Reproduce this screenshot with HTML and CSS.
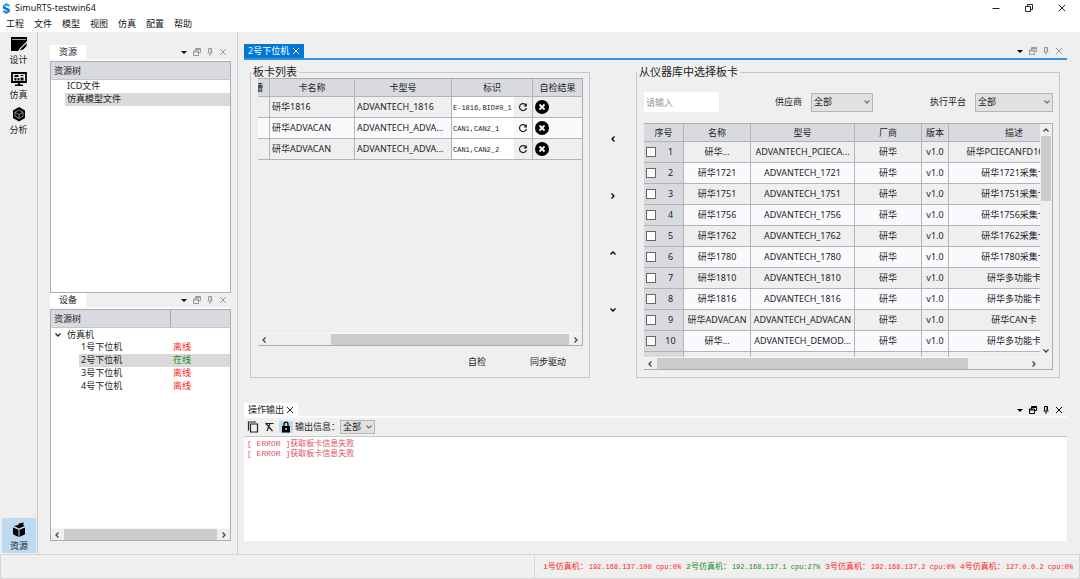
FILE: index.html
```html
<!DOCTYPE html>
<html lang="zh-CN">

<head>
    <meta charset="UTF-8">
    <meta name="viewport" content="width=device-width, initial-scale=1.0">
    <title>SimuRTS-testwin64</title>
    <link rel="stylesheet" href="styles.css">
</head>

<body>
    <!-- shared icons -->
    <svg class="sprite" aria-hidden="true">
        <symbol id="i-drop" viewBox="0 0 8 8"><path d="M1 3h6L4 6z" fill="currentColor"/></symbol>
        <symbol id="i-float" viewBox="0 0 8 8"><path d="M2.500 3V.5h5v4H5.500M.5 3h5v4.500h-5zM.5 4h5M2.500 1.500h5" fill="none" stroke="currentColor"/></symbol>
        <symbol id="i-pin" viewBox="0 0 8 8"><path d="M2.500 4.500v-4h3v4M1.500 5h5M4 5v3M5 .5v4" fill="none" stroke="currentColor"/></symbol>
        <symbol id="i-close" viewBox="0 0 8 8"><path d="M1 1l6 6M7 1L1 7" fill="none" stroke="currentColor"/></symbol>
        <symbol id="i-left" viewBox="0 0 8 8"><path d="M5.500 1.500L3 4l2.500 2.500" fill="none" stroke="currentColor" stroke-width="1.300"/></symbol>
        <symbol id="i-right" viewBox="0 0 8 8"><path d="M2.500 1.500L5 4 2.500 6.500" fill="none" stroke="currentColor" stroke-width="1.300"/></symbol>
        <symbol id="i-up" viewBox="0 0 8 8"><path d="M1.500 5.500L4 3l2.500 2.500" fill="none" stroke="currentColor" stroke-width="1.300"/></symbol>
        <symbol id="i-down" viewBox="0 0 8 8"><path d="M1.500 2.500L4 5l2.500-2.500" fill="none" stroke="currentColor" stroke-width="1.300"/></symbol>
        <symbol id="i-refresh" viewBox="0 0 10 10"><path d="M8 3.200A3.500 3.500 0 1 0 8.400 6" fill="none" stroke="#222" stroke-width="1.200"/><path d="M8.900 1v3.400H5.500z" fill="#222"/></symbol>
        <symbol id="i-fail" viewBox="0 0 14 14"><circle cx="7" cy="7" r="7" fill="#000"/><path d="M4.500 4.500l5 5M9.500 4.500l-5 5" stroke="#fff" stroke-width="1.800"/></symbol>
    </svg>

    <header class="titlebar">
        <svg class="logo" viewBox="0 0 10 12"><path d="M5 0l4 2-1 2-3-1-2 1-2-1.500z" fill="#2ba4e0"/><path d="M1 2.500l2 1.500 5.500 2.500v3L5 8 1 6z" fill="#1673be"/><path d="M8 6.500l1 .5v2.500L5 12 1 9.800l1-2L5 9z" fill="#2388d0"/></svg>
        <span class="app-name">SimuRTS-testwin64</span>
        <div class="window-buttons">
            <button aria-label="最小化"><svg viewBox="0 0 8 8"><path d="M.5 4.500h7" stroke="#222"/></svg></button>
            <button aria-label="还原"><svg viewBox="0 0 8 8"><path d="M.5 2.500h5v5h-5zM2.500 2.500v-2h5v5h-2" fill="none" stroke="#222"/></svg></button>
            <button aria-label="关闭"><svg viewBox="0 0 8 8"><path d="M.8.8l6.400 6.400M7.200.8L.8 7.200" stroke="#222"/></svg></button>
        </div>
    </header>
    <nav class="menubar">
        <a href="#">工程</a>
        <a href="#">文件</a>
        <a href="#">模型</a>
        <a href="#">视图</a>
        <a href="#">仿真</a>
        <a href="#">配置</a>
        <a href="#">帮助</a>
    </nav>

    <main class="workspace">
        <aside class="rail">
            <button>
                <svg viewBox="0 0 16 16"><path d="M0 1h16v4L9 12l-2 3H0z" fill="#000"/><path d="M1 3.500h14" stroke="#ccc" stroke-width=".8"/><path d="M16 6.500l-6 5.500-2 3 4-1 4-4z" fill="#000" stroke="#efefef" stroke-width=".8"/></svg>
                设计
            </button>
            <button>
                <svg viewBox="0 0 16 16"><path d="M1 2h14v9H1z" fill="none" stroke="#000" stroke-width="1.800"/><path d="M3.500 4h4v2h-4zM3.500 7h2v2.500h-2zM6.500 7h2v2.500h-2zM9.500 4h3v1h-3zM9.500 6.500h3v3h-3zM7 11h2v3H7zM4 13.500h8v1.500H4z" fill="#000"/></svg>
                仿真
            </button>
            <button>
                <svg viewBox="0 0 16 16"><path d="M8 1l6 3.500v7.500L8 15.500 2 12V4.500z" fill="#000"/><path d="M8 4l4 2.200v4.100l-4 2.200-4-2.200V6.200zM4 6.200L8 8.500l4-2.300M8 8.500v4" fill="none" stroke="#bbb" stroke-width=".7"/></svg>
                分析
            </button>
            <button class="active">
                <svg viewBox="0 0 16 16"><path d="M2 5.500l5.500 2.300V15L2 12.200zM14 5.500L8.500 7.800V15l5.500-2.800z" fill="#000"/><path d="M3 4l4-1 1-1.500 5-1-1 2 1.500 1.500L8 6.500z" fill="#000"/></svg>
                资源
            </button>
        </aside>

        <section class="side">
            <div class="dock">
                <div class="dock-head">
                    <span class="dock-tab">资源</span>
                    <div class="dock-tools">
                        <button class="dark" aria-label="菜单"><svg><use href="#i-drop"/></svg></button>
                        <button aria-label="浮动"><svg><use href="#i-float"/></svg></button>
                        <button aria-label="固定"><svg><use href="#i-pin"/></svg></button>
                        <button aria-label="关闭"><svg><use href="#i-close"/></svg></button>
                    </div>
                </div>
                <div class="tree">
                    <div class="tree-head"><span>资源树</span></div>
                    <ul class="tree-list">
                        <li>ICD文件</li>
                        <li class="selected">仿真模型文件</li>
                    </ul>
                </div>
            </div>
            <div class="dock">
                <div class="dock-head">
                    <span class="dock-tab">设备</span>
                    <div class="dock-tools">
                        <button class="dark" aria-label="菜单"><svg><use href="#i-drop"/></svg></button>
                        <button aria-label="浮动"><svg><use href="#i-float"/></svg></button>
                        <button aria-label="固定"><svg><use href="#i-pin"/></svg></button>
                        <button aria-label="关闭"><svg><use href="#i-close"/></svg></button>
                    </div>
                </div>
                <div class="tree">
                    <div class="tree-head split"><span>资源树</span></div>
                    <div class="tree-root"><svg><use href="#i-down"/></svg>仿真机</div>
                    <ul class="tree-list devices">
                        <li><span>1号下位机</span><span class="offline">离线</span></li>
                        <li class="selected"><span>2号下位机</span><span class="online">在线</span></li>
                        <li><span>3号下位机</span><span class="offline">离线</span></li>
                        <li><span>4号下位机</span><span class="offline">离线</span></li>
                    </ul>
                    <div class="hscroll">
                        <svg><use href="#i-left"/></svg>
                        <div class="track"><div class="thumb full"></div></div>
                        <svg><use href="#i-right"/></svg>
                    </div>
                </div>
            </div>
        </section>

        <section class="content">
            <div class="editor-head">
                <span class="editor-tab">2号下位机 <svg><use href="#i-close"/></svg></span>
                <div class="dock-tools">
                    <button class="dark" aria-label="菜单"><svg><use href="#i-drop"/></svg></button>
                    <button aria-label="浮动"><svg><use href="#i-float"/></svg></button>
                    <button aria-label="固定"><svg><use href="#i-pin"/></svg></button>
                    <button aria-label="关闭"><svg><use href="#i-close"/></svg></button>
                </div>
            </div>

            <div class="editor">
                <fieldset class="cards">
                    <legend>板卡列表</legend>
                    <div class="table-frame">
                        <div class="table-view">
                            <table class="card-table">
                                <thead>
                                    <tr><th class="c-cut"><span>槽</span></th><th class="c-name">卡名称</th><th class="c-model">卡型号</th><th class="c-id">标识</th><th>自检结果</th></tr>
                                </thead>
                                <tbody>
                                    <tr>
                                        <td></td><td>研华1816</td><td>ADVANTECH_1816</td>
                                        <td class="id-cell"><div><input type="text" aria-label="标识" value="E-1816,BID#0_1"><button aria-label="刷新"><svg><use href="#i-refresh"/></svg></button></div></td>
                                        <td><svg class="fail"><use href="#i-fail"/></svg></td>
                                    </tr>
                                    <tr>
                                        <td></td><td>研华ADVACAN</td><td>ADVANTECH_ADVA...</td>
                                        <td class="id-cell"><div><input type="text" aria-label="标识" value="CAN1,CAN2_1"><button aria-label="刷新"><svg><use href="#i-refresh"/></svg></button></div></td>
                                        <td><svg class="fail"><use href="#i-fail"/></svg></td>
                                    </tr>
                                    <tr>
                                        <td></td><td>研华ADVACAN</td><td>ADVANTECH_ADVA...</td>
                                        <td class="id-cell"><div><input type="text" aria-label="标识" value="CAN1,CAN2_2"><button aria-label="刷新"><svg><use href="#i-refresh"/></svg></button></div></td>
                                        <td><svg class="fail"><use href="#i-fail"/></svg></td>
                                    </tr>
                                </tbody>
                            </table>
                        </div>
                        <div class="hscroll">
                            <svg><use href="#i-left"/></svg>
                            <div class="track"><div class="thumb right"></div></div>
                            <svg><use href="#i-right"/></svg>
                        </div>
                    </div>
                    <div class="card-actions">
                        <button>自检</button>
                        <button>同步驱动</button>
                    </div>
                </fieldset>

                <div class="movers">
                    <button aria-label="添加"><svg><use href="#i-left"/></svg></button>
                    <button aria-label="移除"><svg><use href="#i-right"/></svg></button>
                    <button aria-label="上移"><svg><use href="#i-up"/></svg></button>
                    <button aria-label="下移"><svg><use href="#i-down"/></svg></button>
                </div>

                <fieldset class="library">
                    <legend>从仪器库中选择板卡</legend>
                    <div class="filters">
                        <input type="text" placeholder="请输入" aria-label="搜索">
                        <label for="vendor">供应商</label>
                        <span class="select vendor"><select id="vendor"><option>全部</option></select><svg><use href="#i-down"/></svg></span>
                        <label for="platform">执行平台</label>
                        <span class="select platform"><select id="platform"><option>全部</option></select><svg><use href="#i-down"/></svg></span>
                    </div>
                    <div class="table-frame">
                        <div class="table-row">
                            <div class="table-view">
                                <table class="lib-table">
                                    <thead>
                                        <tr><th class="l-no">序号</th><th class="l-name">名称</th><th class="l-model">型号</th><th class="l-vendor">厂商</th><th class="l-ver">版本</th><th class="l-desc">描述</th></tr>
                                    </thead>
                                    <tbody>
                                        <tr><th><label><input type="checkbox"><span>1</span></label></th><td>研华...</td><td>ADVANTECH_PCIECA...</td><td>研华</td><td>v1.0</td><td>研华PCIECANFD16板卡</td></tr>
                                        <tr><th><label><input type="checkbox"><span>2</span></label></th><td>研华1721</td><td>ADVANTECH_1721</td><td>研华</td><td>v1.0</td><td>研华1721采集卡</td></tr>
                                        <tr><th><label><input type="checkbox"><span>3</span></label></th><td>研华1751</td><td>ADVANTECH_1751</td><td>研华</td><td>v1.0</td><td>研华1751采集卡</td></tr>
                                        <tr><th><label><input type="checkbox"><span>4</span></label></th><td>研华1756</td><td>ADVANTECH_1756</td><td>研华</td><td>v1.0</td><td>研华1756采集卡</td></tr>
                                        <tr><th><label><input type="checkbox"><span>5</span></label></th><td>研华1762</td><td>ADVANTECH_1762</td><td>研华</td><td>v1.0</td><td>研华1762采集卡</td></tr>
                                        <tr><th><label><input type="checkbox"><span>6</span></label></th><td>研华1780</td><td>ADVANTECH_1780</td><td>研华</td><td>v1.0</td><td>研华1780采集卡</td></tr>
                                        <tr><th><label><input type="checkbox"><span>7</span></label></th><td>研华1810</td><td>ADVANTECH_1810</td><td>研华</td><td>v1.0</td><td>研华多功能卡</td></tr>
                                        <tr><th><label><input type="checkbox"><span>8</span></label></th><td>研华1816</td><td>ADVANTECH_1816</td><td>研华</td><td>v1.0</td><td>研华多功能卡</td></tr>
                                        <tr><th><label><input type="checkbox"><span>9</span></label></th><td>研华ADVACAN</td><td>ADVANTECH_ADVACAN</td><td>研华</td><td>v1.0</td><td>研华CAN卡</td></tr>
                                        <tr><th><label><input type="checkbox"><span>10</span></label></th><td>研华...</td><td>ADVANTECH_DEMOD...</td><td>研华</td><td>v1.0</td><td>研华多功能卡</td></tr>
                                        <tr><th></th><td></td><td></td><td></td><td></td><td></td></tr>
                                    </tbody>
                                </table>
                            </div>
                            <div class="vscroll">
                                <svg><use href="#i-up"/></svg>
                                <div class="track"><div class="thumb"></div></div>
                                <svg><use href="#i-down"/></svg>
                            </div>
                        </div>
                        <div class="hscroll corner">
                            <svg><use href="#i-left"/></svg>
                            <div class="track"><div class="thumb left"></div></div>
                            <svg><use href="#i-right"/></svg>
                        </div>
                    </div>
                </fieldset>
            </div>

            <div class="output">
                <div class="output-head">
                    <span class="output-tab">操作输出 <svg><use href="#i-close"/></svg></span>
                    <div class="dock-tools">
                        <button class="dark" aria-label="菜单"><svg><use href="#i-drop"/></svg></button>
                        <button class="dark" aria-label="浮动"><svg><use href="#i-float"/></svg></button>
                        <button class="dark" aria-label="固定"><svg><use href="#i-pin"/></svg></button>
                        <button class="dark" aria-label="关闭"><svg><use href="#i-close"/></svg></button>
                    </div>
                </div>
                <div class="output-tools">
                    <button aria-label="复制"><svg viewBox="0 0 12 12"><path d="M3.500 3h7v8h-7z" fill="none" stroke="#222" stroke-width="1.200"/><path d="M1.500 9.500V1H9" fill="none" stroke="#222" stroke-width="1.200"/></svg></button>
                    <button aria-label="清除格式"><svg viewBox="0 0 12 12"><path d="M3 2.500h7.500M2.500 2l7 8M6.800 3L4 10" fill="none" stroke="#222" stroke-width="1.200"/></svg></button>
                    <button class="locked" aria-label="锁定"><svg viewBox="0 0 12 12"><path d="M2 5h8v6.500H2z" fill="#000"/><path d="M4 5V3.200a2 2 0 0 1 4 0V5" fill="none" stroke="#000" stroke-width="1.300"/><circle cx="6" cy="8" r="1" fill="#bcd9ee"/></svg></button>
                    <label for="level">输出信息：</label>
                    <span class="select level"><select id="level"><option>全部</option></select><svg><use href="#i-down"/></svg></span>
                </div>
                <div class="log">
                    <p>[ ERROR ]获取板卡信息失败</p>
                    <p>[ ERROR ]获取板卡信息失败</p>
                </div>
            </div>
        </section>
    </main>

    <footer class="statusbar">
        <div class="hosts">
            <span class="offline"><b>1号仿真机：</b>192.168.137.100 cpu:0%</span>
            <span class="online"><b>2号仿真机：</b>192.168.137.1 cpu:27%</span>
            <span class="offline"><b>3号仿真机：</b>192.168.137.2 cpu:0%</span>
            <span class="offline"><b>4号仿真机：</b>127.0.0.2 cpu:0%</span>
        </div>
    </footer>
</body>

</html>
```
FILE: styles.css
```css
* {
    box-sizing: border-box;
}

body {
    margin: 0;
    height: 100vh;
    display: flex;
    flex-direction: column;
    background: #efefef;
    color: #222;
    font-family: "Noto Sans", "Noto Sans CJK SC", sans-serif;
    font-size: 9px;
    line-height: 12px;
    overflow: hidden;
}

button, input, select {
    font: inherit;
    color: inherit;
}

button {
    border: none;
    background: none;
    padding: 0;
}

svg {
    display: block;
    width: 8px;
    height: 8px;
    flex: none;
}

.sprite {
    position: absolute;
    width: 0;
    height: 0;
}

.offline {
    color: #ff2020;
}

.online {
    color: #109010;
}

/* title and menu */
.titlebar {
    display: flex;
    align-items: center;
    height: 16px;
    padding: 0 14px 0 2px;
    background: #fff;
}

.logo {
    width: 9px;
    height: 11px;
    margin-right: 4px;
}

.window-buttons {
    display: flex;
    gap: 25px;
    margin-left: auto;
}

.menubar {
    display: flex;
    gap: 10px;
    height: 16px;
    padding: 2px 6px;
    background: #fff;
}

.menubar a {
    color: #111;
    text-decoration: none;
}

.workspace {
    flex: 1;
    display: flex;
    min-height: 0;
}

.rail {
    display: flex;
    flex-direction: column;
    width: 38px;
    border-right: 1px solid #c8c8c8;
}

.rail button {
    display: flex;
    flex-direction: column;
    align-items: center;
    gap: 2px;
    height: 35px;
    padding-top: 4px;
}

.rail svg {
    width: 16px;
    height: 16px;
}

.rail .active {
    margin: auto 1px 1px 2px;
    background: #bedaf0;
}

/* left docks */
.side {
    display: flex;
    flex-direction: column;
    width: 200px;
    padding: 13px 6px 13px 12px;
    border-right: 1px solid #cfcfcf;
}

.dock {
    flex: 1;
    display: flex;
    flex-direction: column;
}

.dock-head {
    display: flex;
    align-items: center;
    justify-content: space-between;
    height: 16px;
    border-bottom: 2px solid #fafafa;
}

.dock-tab {
    padding: 0 9px;
    line-height: 14px;
    background: #fff;
}

.dock-tools {
    display: flex;
    gap: 5px;
    padding-right: 4px;
    color: #999;
}

.dock-tools .dark {
    color: #000;
}

.tree {
    flex: 1;
    display: flex;
    flex-direction: column;
    border: 1px solid #abadb5;
    background: #fff;
}

.tree-head {
    display: flex;
    height: 18px;
    padding-left: 3px;
    line-height: 17px;
    background: #d8dae0;
    border-bottom: 1px solid #c5c7cc;
}

.tree-head.split span {
    width: 117px;
    border-right: 1px solid #aaa;
}

.tree-root {
    display: flex;
    align-items: center;
    gap: 5px;
    height: 13px;
    padding-left: 3px;
}

.tree-list {
    margin: 0;
    padding: 0 0 0 14px;
    list-style: none;
}

.tree-list li {
    display: flex;
    height: 13px;
    padding-left: 2px;
}

.tree-list .selected {
    background: #d9d9d9;
}

.tree-list.devices {
    padding-left: 28px;
}

.devices span:first-child {
    width: 92px;
}

/* scroll bars */
.hscroll {
    display: flex;
    align-items: center;
    gap: 3px;
    height: 12px;
    margin-top: auto;
    padding: 0 2px;
    border-top: 1px solid #f8f8f8;
    background: #efefef;
    color: #444;
}

.hscroll.corner {
    padding-right: 14px;
}

.vscroll {
    display: flex;
    flex-direction: column;
    align-items: center;
    gap: 2px;
    width: 12px;
    padding: 2px 0;
    color: #444;
}

.track {
    flex: 1;
    align-self: stretch;
}

.thumb {
    height: 100%;
    background: #cbcbcb;
}

.thumb.right {
    width: 80%;
    margin-left: auto;
}

.thumb.left {
    width: 84%;
}

.vscroll .thumb {
    height: 31%;
    margin: 0 1px;
}

/* main area */
.content {
    flex: 1;
    display: flex;
    flex-direction: column;
    min-width: 0;
    padding: 12px 13px 13px 6px;
}

.editor-head {
    display: flex;
    align-items: center;
    justify-content: space-between;
    height: 16px;
    border-bottom: 2px solid #3292dc;
}

.editor-tab {
    display: flex;
    align-items: center;
    gap: 3px;
    height: 14px;
    padding: 0 4px;
    background: #0078d7;
    color: #fff;
}

.editor {
    flex: 1;
    display: flex;
    padding: 6px 7px 25px 6px;
    min-height: 0;
}

fieldset {
    display: flex;
    flex-direction: column;
    min-width: 0;
    margin: 0;
    border: 1px solid #c8c8c8;
}

legend {
    margin-left: -7px;
    padding: 0 2px;
    font-size: 11px;
    line-height: 12px;
}

.cards {
    flex: 325;
    padding: 0 6px 0 7px;
}

.library {
    flex: 409;
    padding: 14px 6px 7px 7px;
}

.table-frame {
    flex: 1;
    display: flex;
    flex-direction: column;
    min-height: 0;
    border: 1px solid #abadb5;
    border-left: none;
}

.table-row {
    flex: 1;
    display: flex;
    min-height: 0;
}

.table-view {
    flex: 1;
    min-width: 0;
    min-height: 0;
    overflow: hidden;
}

table {
    width: 100%;
    table-layout: fixed;
    border-collapse: separate;
    border-spacing: 0;
}

th, td {
    height: 21px;
    padding: 0;
    font-weight: normal;
    white-space: nowrap;
    overflow: hidden;
    border-right: 1px solid #b4b4b4;
    border-bottom: 1px solid #b4b4b4;
}

th {
    background: #d8dae0;
}

thead th {
    height: 18px;
}

tbody tr:nth-child(even) td {
    background: #fafafe;
}

.card-table td {
    padding-left: 2px;
}

.card-table th:last-child, .card-table td:last-child {
    border-right: none;
}

.c-cut {
    width: 12px;
}

/* column is scrolled partly out of view */
.c-cut span {
    display: block;
    margin-left: -4px;
    text-align: left;
}

.c-name {
    width: 85px;
}

.c-model {
    width: 97px;
}

.c-id {
    width: 81px;
}

.card-table .id-cell {
    padding: 0;
}

.id-cell div {
    display: flex;
    align-items: center;
    gap: 4px;
}

.id-cell input {
    width: 62px;
    height: 20px;
    padding: 2px 1px 0;
    border: none;
    background: #fff;
    font-family: "Liberation Mono", monospace;
    font-size: 7px;
}

.id-cell svg {
    width: 10px;
    height: 10px;
}

.fail {
    width: 14px;
    height: 14px;
}

.card-actions {
    display: flex;
    align-items: center;
    justify-content: flex-end;
    gap: 44px;
    height: 31px;
    padding-right: 17px;
}

.movers {
    display: flex;
    flex-direction: column;
    align-items: center;
    gap: 49px;
    width: 46px;
    padding-top: 69px;
}

.movers button {
    color: #000;
}

.filters {
    display: flex;
    align-items: center;
    height: 20px;
    margin-bottom: 11px;
}

.filters input {
    width: 75px;
    height: 20px;
    padding: 0 2px;
    border: none;
    background: #fff;
    margin-right: auto;
}

.filters input::placeholder {
    color: #999;
}

.select {
    position: relative;
    display: block;
}

.select svg {
    position: absolute;
    right: 2px;
    top: 50%;
    margin-top: -4px;
    color: #777;
    pointer-events: none;
}

select {
    appearance: none;
    display: block;
    width: 100%;
    height: 19px;
    padding: 0 2px;
    border: 1px solid #b5b5b5;
    border-radius: 0;
    background: #e1e1e1;
}

.vendor {
    width: 62px;
    margin: 0 57px 0 9px;
}

.platform {
    width: 78px;
    margin-left: 9px;
}

.lib-table {
    width: 436px;
    text-align: center;
}

.l-no {
    width: 40px;
}

.l-name {
    width: 67px;
}

.l-model {
    width: 104px;
}

.l-vendor {
    width: 67px;
}

.l-ver {
    width: 27px;
}

.lib-table label {
    display: flex;
    align-items: center;
    padding-left: 2px;
}

.lib-table label span {
    flex: 1;
    padding-left: 2px;
}

.lib-table input {
    appearance: none;
    width: 10px;
    height: 10px;
    margin: 0;
    border: 1px solid #666;
    background: #fff;
}

/* output panel */
.output {
    flex: 0 0 138px;
    display: flex;
    flex-direction: column;
}

.output-head {
    display: flex;
    align-items: center;
    justify-content: space-between;
    height: 15px;
    border-bottom: 2px solid #fbfbfb;
}

.output-tab {
    display: flex;
    align-items: center;
    gap: 2px;
    height: 13px;
    padding: 0 4px;
    background: #fff;
}

.output-tools {
    display: flex;
    align-items: center;
    gap: 4px;
    height: 19px;
    padding-left: 3px;
    border-bottom: 1px solid #c8c8c8;
}

.output-tools svg {
    width: 12px;
    height: 12px;
}

.output-tools .locked {
    padding: 0 1px;
    background: #bcd9ee;
}

.output-tools label {
    width: 41px;
    margin-left: -2px;
    white-space: nowrap;
}

.output-tools select {
    height: 14px;
}

.output-tools .level {
    width: 35px;
}

.output-tools .select svg {
    width: 8px;
    height: 8px;
}

.log {
    flex: 1;
    padding: 2px 3px;
    background: #fff;
    color: #dc5068;
    font-family: "Liberation Mono", "Noto Sans CJK SC", monospace;
    font-size: 8px;
    line-height: 10px;
}

.log p {
    margin: 0;
}

.statusbar {
    display: flex;
    justify-content: flex-end;
    height: 25px;
    border: 1px solid #d6d6d6;
}

.hosts {
    display: flex;
    align-items: center;
    gap: 5px;
    padding: 0 6px 0 8px;
    border-left: 1px solid #d6d6d6;
    font-family: "Liberation Mono", "Noto Sans CJK SC", monospace;
    font-size: 7px;
}

.hosts b {
    margin-right: 1px;
    font-size: 8px;
    font-weight: normal;
}
```
